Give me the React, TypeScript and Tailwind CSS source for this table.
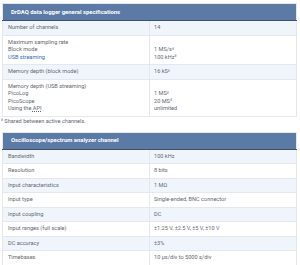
import React from 'react';

// ─────────────────────────────────────────────────────────────────────────────
// Datos
// ─────────────────────────────────────────────────────────────────────────────

type Row = { label: React.ReactNode; value: React.ReactNode };

const Sup = () => <sup className="text-[3.2px] relative -top-[1.5px] align-baseline">#</sup>;

const general: Row[] = [
  { label: 'Number of channels', value: '14' },
  {
    label: (
      <>
        Maximum sampling rate<br />Block mode<br />
        <span className="text-[#2f6db5]">USB streaming</span>
      </>
    ),
    value: (
      <>
        <br />1 MS/s<Sup /><br />100 kHz<Sup />
      </>
    ),
  },
  { label: 'Memory depth (block mode)', value: <>16 kS<Sup /></> },
  {
    label: (
      <>
        Memory depth (USB streaming)<br />PicoLog<br />PicoScope<br />
        Using the <span className="underline decoration-dotted">API</span>
      </>
    ),
    value: (
      <>
        <br />1 MS<Sup /><br />20 MS<Sup /><br />unlimited
      </>
    ),
  },
];

const scope: Row[] = [
  { label: 'Bandwidth', value: '100 kHz' },
  { label: 'Resolution', value: '8 bits' },
  { label: 'Input characteristics', value: '1 MΩ' },
  { label: 'Input type', value: 'Single-ended, BNC connector' },
  { label: 'Input coupling', value: 'DC' },
  { label: 'Input ranges (full scale)', value: '±1.25 V, ±2.5 V, ±5 V, ±10 V' },
  { label: 'DC accuracy', value: '±3%' },
  { label: 'Timebases', value: '10 µs/div to 5000 s/div' },
];

// ─────────────────────────────────────────────────────────────────────────────
// Tabla
// ─────────────────────────────────────────────────────────────────────────────

function SpecTable({ title, rows }: { title: string; rows: Row[] }) {
  return (
    <table className="w-[295px] border-collapse border border-[#e4e8ee] table-fixed">
      <thead>
        <tr>
          <th
            colSpan={2}
            className="h-[17px] bg-[#5b7aa6] border-b border-b-[#3e516d] text-left pl-[8px] font-bold text-white text-[5.9px] leading-[7px]"
          >
            {title}
          </th>
        </tr>
      </thead>
      <tbody>
        {rows.map((r, i) => (
          <tr key={i} className={`${i % 2 === 0 ? 'bg-[#f0f5fc]' : 'bg-white'} border-t border-[#e4e8ee] first:border-t-0`}>
            <td className="w-[103px] h-[14px] px-[5px] py-[3px] align-middle border-r border-[#e4e8ee] leading-[7.5px]">
              {r.label}
            </td>
            <td className="px-[4px] py-[3px] align-middle leading-[7.5px]">{r.value}</td>
          </tr>
        ))}
      </tbody>
    </table>
  );
}

export default function App() {
  return (
    <div className="w-[300px] h-[265px] bg-white overflow-hidden text-[5.6px] text-[#63686f] font-['Roboto','Liberation_Sans',sans-serif]">
      <div className="pt-[3px] pl-[2px]">
        <SpecTable title="DrDAQ data logger general specifications" rows={general} />
      </div>
      <p className="pl-[1px] pt-[1px] leading-[7px]">
        <Sup /> Shared between active channels.
      </p>
      <div className="pt-[7px] pl-[2px]">
        <SpecTable title="Oscilloscope/spectrum analyzer channel" rows={scope} />
      </div>
    </div>
  );
}
